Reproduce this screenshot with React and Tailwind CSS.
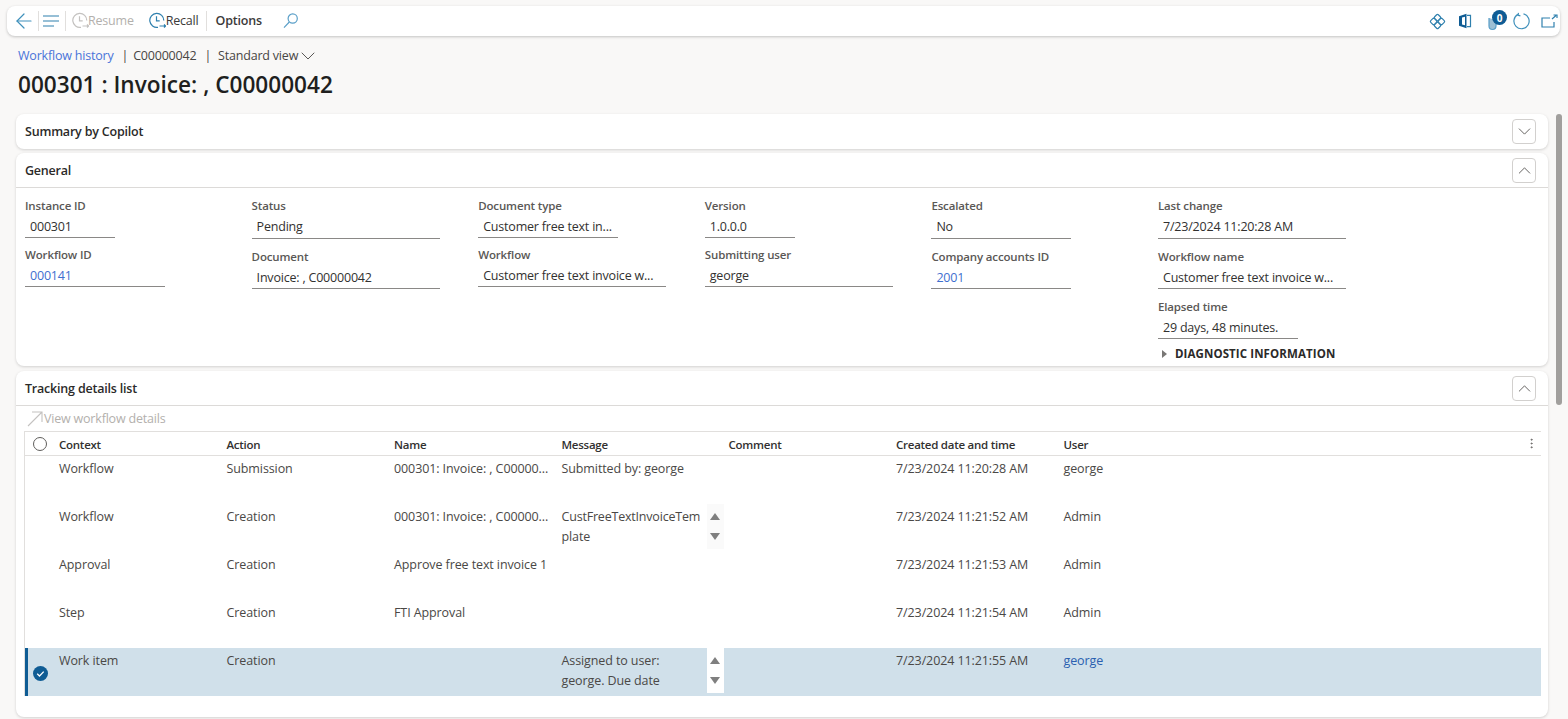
import { ChevronDown, ChevronUp, ArrowLeft, EllipsisVertical } from 'lucide-react';

const generalColumns = [
  [
    { label: 'Instance ID', value: '000301', width: 'w-[90px]' },
    { label: 'Workflow ID', value: '000141', width: 'w-[140px]', link: true },
  ],
  [
    { label: 'Status', value: 'Pending', width: 'w-[188px]', tall: true },
    { label: 'Document', value: 'Invoice: , C00000042', width: 'w-[188px]' },
  ],
  [
    { label: 'Document type', value: 'Customer free text in...', width: 'w-[140px]' },
    { label: 'Workflow', value: 'Customer free text invoice w...', width: 'w-[188px]' },
  ],
  [
    { label: 'Version', value: '1.0.0.0', width: 'w-[90px]' },
    { label: 'Submitting user', value: 'george', width: 'w-[188px]' },
  ],
  [
    { label: 'Escalated', value: 'No', width: 'w-[140px]', tall: true },
    { label: 'Company accounts ID', value: '2001', width: 'w-[140px]', link: true },
  ],
  [
    { label: 'Last change', value: '7/23/2024 11:20:28 AM', width: 'w-[188px]', tall: true },
    { label: 'Workflow name', value: 'Customer free text invoice w...', width: 'w-[188px]' },
    { label: 'Elapsed time', value: '29 days, 48 minutes.', width: 'w-[140px]' },
  ],
];

const rows = [
  { context: 'Workflow', action: 'Submission', name: '000301: Invoice: , C00000...', message: ['Submitted by: george'], date: '7/23/2024 11:20:28 AM', user: 'george' },
  { context: 'Workflow', action: 'Creation', name: '000301: Invoice: , C00000...', message: ['CustFreeTextInvoiceTem', 'plate'], scroll: true, date: '7/23/2024 11:21:52 AM', user: 'Admin' },
  { context: 'Approval', action: 'Creation', name: 'Approve free text invoice 1', message: [], date: '7/23/2024 11:21:53 AM', user: 'Admin' },
  { context: 'Step', action: 'Creation', name: 'FTI Approval', message: [], date: '7/23/2024 11:21:54 AM', user: 'Admin' },
  { context: 'Work item', action: 'Creation', name: '', message: ['Assigned to user:', 'george. Due date'], scroll: true, date: '7/23/2024 11:21:55 AM', user: 'george', selected: true },
];

function ClockIcon({ color }) {
  return (
    <svg width="17" height="18" viewBox="0 0 17 18" fill="none" stroke={color} strokeWidth="1.2">
      <path d="M9 15.3A7 7 0 1 1 14.8 8.5" />
      <path d="M7.5 4.2v4.6h3.2" />
      <path d="M10.5 14h6M15 12.5l1.6 1.5-1.6 1.5" />
    </svg>
  );
}

function Field({ label, value, width, link, tall, last }) {
  return (
    <div className={tall || last ? 'mb-[8px]' : 'mb-[7px]'}>
      <div className="h-[19px] text-[11.5px] font-semibold leading-[19px] tracking-[-0.14px] text-[#5a5856]">{label}</div>
      <div className={`${width} ${tall ? 'h-[24px]' : 'h-[23px]'} border-b border-[#8a8886] px-[5px] text-[12.5px] leading-[24px] tracking-[-0.2px] ${link ? 'text-[#3f6fcf]' : 'text-[#323130]'}`}>
        {value}
      </div>
    </div>
  );
}

function CollapseButton({ open }) {
  const Icon = open ? ChevronUp : ChevronDown;
  return (
    <button className="flex h-[25px] w-[24px] items-center justify-center rounded-[4px] border-[1.5px] border-[#d2d0ce] bg-white text-[#605e5c]">
      <Icon className="h-[21px] w-[21px]" strokeWidth={1.1} />
    </button>
  );
}

function CardHeader({ title, open }) {
  return (
    <div className={`flex h-[35px] items-center justify-between pl-[9px] pr-[12px] ${open ? 'border-b border-[#dcdad8] pt-[1px]' : ''}`}>
      <span className="pt-[1px] text-[12.5px] font-semibold tracking-[-0.2px] text-[#2b2a29]">{title}</span>
      <CollapseButton open={open} />
    </div>
  );
}

function ScrollArrows({ onSelected }) {
  return (
    <div className={`flex h-[45px] w-[17px] shrink-0 flex-col items-center justify-between py-[9px] ${onSelected ? 'bg-white' : 'bg-[#fafafa]'}`}>
      <span className="h-0 w-0 border-x-[5px] border-b-[7px] border-x-transparent border-b-[#7f7f7f]" />
      <span className="h-0 w-0 border-x-[5px] border-t-[7px] border-x-transparent border-t-[#7f7f7f]" />
    </div>
  );
}

function TrackingRow({ row }) {
  return (
    <div className={`grid h-[48px] grid-cols-[31px_167.5px_167.5px_167.5px_167px_167.5px_167.5px_1fr] text-[12.5px] leading-[20px] tracking-[-0.1px] text-[#4a4846] ${row.selected ? 'border-l-[3px] border-[#0f5c94] bg-[#d0e0ea]' : 'pl-[3px]'}`}>
      <div className="flex items-center pl-[5px] pt-[2px]">
        {row.selected && (
          <svg width="15" height="15" viewBox="0 0 15 15">
            <circle cx="7.5" cy="7.5" r="7.5" fill="#0f5c94" />
            <path d="M4.2 7.8l2.3 2.2 4.2-4.4" fill="none" stroke="#fff" strokeWidth="1.3" />
          </svg>
        )}
      </div>
      <div className="pt-[3px]">{row.context}</div>
      <div className="pt-[3px]">{row.action}</div>
      <div className="pt-[3px]">{row.name}</div>
      <div className="flex items-start">
        <div className="w-[145px] whitespace-nowrap pt-[3px]">
          {row.message.map((line) => <div key={line} className={line.length > 20 ? 'tracking-[-0.2px]' : ''}>{line}</div>)}
        </div>
        {row.scroll && <ScrollArrows onSelected={row.selected} />}
      </div>
      <div />
      <div className="pt-[3px]">{row.date}</div>
      <div className={`pt-[3px] ${row.selected ? 'text-[#2a5fb0]' : ''}`}>{row.user}</div>
    </div>
  );
}

export default function App() {
  return (
    <div className="relative h-[719px] overflow-hidden bg-[#f9f8f7] font-['Open_Sans','Liberation_Sans',sans-serif] text-[#323130]">
      {/* command bar */}
      <div className="pl-[7px] pr-[8px] pt-[6px]">
        <div className="flex h-[30px] items-center justify-between rounded-[8px] bg-white pl-[5px] pr-[2px] shadow-[0_1px_3px_rgba(0,0,0,0.22)]">
          <div className="flex items-center">
            <ArrowLeft className="h-[24px] w-[24px] text-[#3f90bb]" strokeWidth={1.2} />
            <div className="ml-[2px] h-[20px] w-px bg-[#e1dfdd]" />
            <svg className="ml-[4px]" width="17" height="12" viewBox="0 0 17 12" stroke="#2f80ae" strokeWidth="1.2">
              <path d="M0 1h16M0 6h16M0 11h11" />
            </svg>
            <div className="ml-[5px] h-[20px] w-px bg-[#e1dfdd]" />
            <div className="ml-[6px] flex items-center text-[12.5px] tracking-[-0.2px] text-[#b3b0ad]">
              <ClockIcon color="#c4c2c0" />
              <span className="ml-[-1px]">Resume</span>
            </div>
            <div className="ml-[15px] flex items-center text-[12.5px] tracking-[-0.2px] text-[#3b3a39]">
              <ClockIcon color="#2f80ae" />
              <span>Recall</span>
            </div>
            <div className="ml-[7px] h-[20px] w-px bg-[#e1dfdd]" />
            <span className="ml-[9px] text-[12.5px] font-semibold tracking-[-0.2px] text-[#3b3a39]">Options</span>
            <svg className="ml-[21px]" width="15" height="16" viewBox="0 0 15 16" fill="none" stroke="#5a9fc8" strokeWidth="1.2">
              <circle cx="9.7" cy="5.5" r="4.6" />
              <path d="M6.3 9L1 14.6" />
            </svg>
          </div>
          <div className="flex items-center">
            <svg width="17" height="17" viewBox="0 0 17 17" fill="none" stroke="#2f80ae" strokeWidth="1.2">
              <rect x="5.9" y="2" width="5.2" height="5.2" rx="1.2" transform="rotate(45 8.5 4.6)" />
              <rect x="5.9" y="9.8" width="5.2" height="5.2" rx="1.2" transform="rotate(45 8.5 12.4)" />
              <rect x="2" y="5.9" width="5.2" height="5.2" rx="1.2" transform="rotate(45 4.6 8.5)" />
              <rect x="9.8" y="5.9" width="5.2" height="5.2" rx="1.2" transform="rotate(45 12.4 8.5)" />
            </svg>
            <svg className="ml-[12px]" width="14" height="16" viewBox="0 0 14 16">
              <path d="M1 3.2L8.5 0.8v14.4L1 12.8z" fill="#0f5c94" />
              <path d="M4 4.6l3-.8v8.4l-3-.8z" fill="#fff" />
              <path d="M9 2.4h3.5v11.2H9" fill="none" stroke="#2f80ae" strokeWidth="1.2" />
            </svg>
            <div className="relative ml-[16px] h-[20px] w-[19px]">
              <svg className="absolute left-0 top-[4px]" width="10" height="16" viewBox="0 0 10 16" fill="#9dbfd4" stroke="#5a9fc8" strokeWidth="1.2">
                <path d="M1 3v8a3.5 3.5 0 0 0 7 0V5" />
              </svg>
              <span className="absolute left-[4px] top-[-1px] flex h-[15px] w-[15px] items-center justify-center rounded-full bg-[#0f5c94] text-[10px] font-bold leading-none text-white">0</span>
            </div>
            <svg className="ml-[5px]" width="18" height="18" viewBox="0 0 18 18" fill="none" stroke="#3f90bb" strokeWidth="1.2">
              <path d="M6 2.4A7.6 7.6 0 1 0 11.5 1.8" />
              <path d="M6.5 0.8L6 3.2l2.4.6" />
            </svg>
            <svg className="ml-[11px]" width="17" height="15" viewBox="0 0 17 15" fill="none" stroke="#2f80ae" strokeWidth="1.2">
              <path d="M9 4H1v9h12V8" />
              <path d="M11 5l4-3.5M12.5 1H16v3" />
            </svg>
          </div>
        </div>
      </div>

      {/* page title */}
      <div className="pl-[18px] pt-[11px]">
        <div className="flex h-[18px] items-center text-[12.5px] leading-[18px] tracking-[-0.2px] text-[#484644]">
          <span className="text-[#4a74d9]">Workflow history</span>
          <span className="ml-[8px]">|</span>
          <span className="ml-[5px]">C00000042</span>
          <span className="ml-[8px]">|</span>
          <span className="ml-[7px]">Standard view</span>
          <ChevronDown className="ml-[-2px] h-[24px] w-[24px]" strokeWidth={0.9} />
        </div>
        <h1 className="mt-[5px] text-[22.6px] font-semibold leading-[30px] text-[#201f1e]">000301 : Invoice: , C00000042</h1>
      </div>

      {/* cards */}
      <div className="ml-[16px] mt-[14px] flex w-[1532px] flex-col">
        <div className="h-[35px] rounded-[8px] bg-white shadow-[0_1px_3px_rgba(0,0,0,0.16)]">
          <CardHeader title="Summary by Copilot" />
        </div>
        <div className="mt-[4px] h-[213px] rounded-[8px] bg-white shadow-[0_1px_3px_rgba(0,0,0,0.16)]">
          <CardHeader title="General" open />
          <div className="grid grid-cols-[226.6px_226.6px_226.6px_226.6px_226.6px_1fr] pl-[9px] pt-[8px]">
            {generalColumns.map((fields, i) => (
              <div key={i}>
                {fields.map((field) => <Field key={field.label} {...field} last={i === 5} />)}
                {i === 5 && (
                  <div className="mt-[-1px] flex h-[16px] items-center pl-[4px] text-[11.5px] font-bold tracking-[0.1px] text-[#2b2a29]">
                    <span className="mr-[8px] h-0 w-0 border-y-[4px] border-l-[5px] border-y-transparent border-l-[#797775]" />
                    DIAGNOSTIC INFORMATION
                  </div>
                )}
              </div>
            ))}
          </div>
        </div>
        <div className="mt-[5px] h-[346px] rounded-[8px] bg-white shadow-[0_1px_3px_rgba(0,0,0,0.16)]">
          <CardHeader title="Tracking details list" open />
          <div className="flex h-[25px] items-center pl-[11px] pt-[1px] text-[12.5px] tracking-[-0.2px] text-[#b3b0ad]">
            <svg width="16" height="16" viewBox="0 0 16 16" fill="none" stroke="#c4c2c0" strokeWidth="1.1">
              <path d="M1 15L15 1M5 1h10v10" />
            </svg>
            <span className="ml-[1px]">View workflow details</span>
          </div>
          <div className="ml-[8px] mr-[7px] border-l border-[#e1dfdd]">
            <div className="grid h-[25px] grid-cols-[31px_167.5px_167.5px_167.5px_167px_167.5px_167.5px_167.5px_1fr] items-center border-y border-[#e1dfdd] pl-[3px] pt-[2px] text-[11.5px] font-semibold tracking-[-0.25px] text-[#323130]">
              <span className="mb-[1px] ml-[5px] h-[14px] w-[14px] rounded-full border border-[#605e5c]" />
              {['Context', 'Action', 'Name', 'Message', 'Comment', 'Created date and time', 'User'].map((h) => (
                <span key={h}>{h}</span>
              ))}
              <EllipsisVertical className="mb-[2px] ml-auto mr-[3px] h-[13px] w-[13px] text-[#605e5c]" strokeWidth={1.5} />
            </div>
            {rows.map((row, i) => <TrackingRow key={i} row={row} />)}
          </div>
        </div>
      </div>

      {/* page scrollbar */}
      <div className="absolute left-[1556px] top-[114px] h-[291px] w-[6px] rounded-full bg-[#a19f9d]" />
    </div>
  );
}
